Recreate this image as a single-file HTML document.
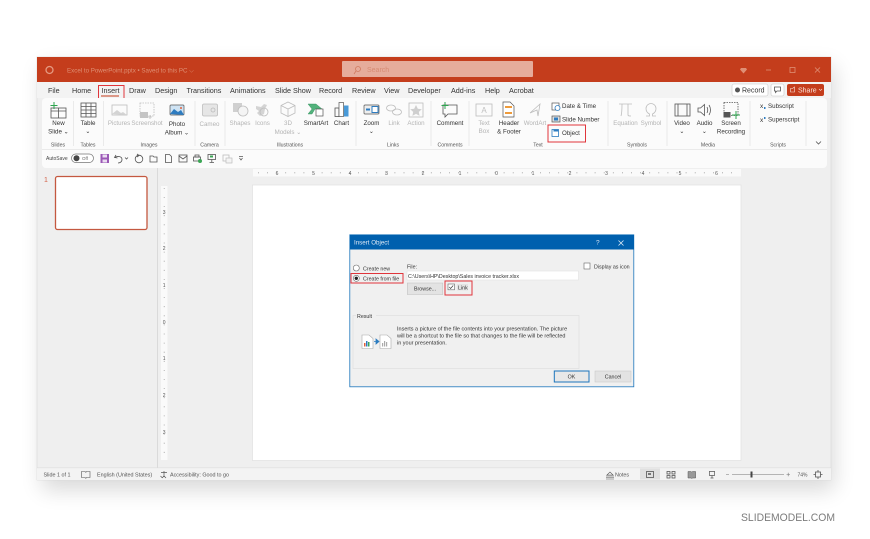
<!DOCTYPE html>
<html><head><meta charset="utf-8"><style>
html,body{margin:0;padding:0;background:#fff;width:870px;height:539px;overflow:hidden}
svg{display:block;font-family:"Liberation Sans",sans-serif}
.m{font-size:7.2px;fill:#333}
.l{font-size:6.2px;fill:#333;text-anchor:middle}
.g{font-size:6.2px;fill:#b4b4b4;text-anchor:middle}
.gr{font-size:5.2px;fill:#555;text-anchor:middle}
.s{font-size:5.4px;fill:#555}
.d{font-size:5.3px;fill:#333}
.dr{font-size:5.5px;fill:#333}
.i{fill:none;stroke:#555;stroke-width:.8}
.ig{fill:none;stroke:#bdbdbd;stroke-width:.8}
.r{fill:none;stroke:#e0343a;stroke-width:1}
.t{font-size:5px;fill:#555;text-anchor:middle}
</style></head><body>
<svg width="870" height="539" viewBox="0 0 870 539" xmlns="http://www.w3.org/2000/svg">
<defs><filter id="sh" x="-15%" y="-20%" width="130%" height="145%"><feGaussianBlur stdDeviation="11"/></filter>
<filter id="b"><feGaussianBlur stdDeviation="0.35"/></filter></defs>
<rect x="42" y="66" width="792" height="424" fill="#000" opacity=".15" filter="url(#sh)"/>
<g filter="url(#b)">
<rect x="37" y="57" width="794" height="423" fill="#efefef" stroke="#d8d8d8" stroke-width=".6"/>
<rect x="37" y="57" width="794" height="25" fill="#c43e1c"/>
<circle cx="49.500" cy="70" r="3.500" fill="none" stroke="#e59a82" stroke-width="1.300"/>
<text x="67" y="72.500" font-size="6.200" fill="#df8f75">Excel to PowerPoint.pptx  •  Saved to this PC ⌵</text>
<rect x="342" y="61" width="191" height="16" rx="1" fill="#e6ac9b"/>
<circle cx="358" cy="69" r="2.500" fill="none" stroke="#d07a5f" stroke-width=".8"/><path d="M356 71l-2 3" stroke="#d07a5f" stroke-width=".8"/>
<text x="367" y="71.800" font-size="7" fill="#d68b73">Search</text>
<path d="M741 68h5l1 1.500-3.500 4-3.500-4z" fill="#df8f75"/>
<path d="M766 70h5" stroke="#df8f75" stroke-width=".8"/>
<rect x="790" y="67.500" width="5" height="5" fill="none" stroke="#df8f75" stroke-width=".8"/>
<path d="M815 67.500l5 5m0-5l-5 5" stroke="#df8f75" stroke-width=".8"/>

<rect x="37" y="82" width="794" height="16" fill="#f3f3f3"/>
<g class="m"><text class="m" x="48" y="93">File</text><text class="m" x="72" y="93">Home</text><text class="m" x="101.500" y="93">Insert</text><text class="m" x="129" y="93">Draw</text><text class="m" x="155" y="93">Design</text><text class="m" x="186.500" y="93">Transitions</text><text class="m" x="230" y="93">Animations</text><text class="m" x="275" y="93">Slide Show</text><text class="m" x="319" y="93">Record</text><text class="m" x="352" y="93">Review</text><text class="m" x="384" y="93">View</text><text class="m" x="408" y="93">Developer</text><text class="m" x="451" y="93">Add-ins</text><text class="m" x="485" y="93">Help</text><text class="m" x="509" y="93">Acrobat</text></g>
<rect x="101" y="95.500" width="18" height="1" fill="#c43e1c"/>
<rect x="98.500" y="85.500" width="25.500" height="14.500" class="r"/>

<rect x="732" y="84" width="36" height="12" rx="2" fill="#fff" stroke="#c8c8c8" stroke-width=".6"/>
<circle cx="737.500" cy="90" r="2.500" fill="#555"/><text x="742" y="92.500" font-size="7" fill="#333">Record</text>
<rect x="771" y="84" width="13" height="12" rx="2" fill="#fff" stroke="#c8c8c8" stroke-width=".6"/><path d="M774.500 87h6v4h-3.500l-1.500 1.500v-1.500h-1z" class="i"/>
<rect x="787" y="84" width="37" height="12" rx="2" fill="#c43e1c"/><text x="798" y="92.500" font-size="7" fill="#fbe3da">Share</text><path d="M790.500 88.500h2l2-1.500v5h-4z" fill="none" stroke="#fbe3da" stroke-width=".6"/><path d="M819 89l1.500 1.500 1.500-1.500" fill="none" stroke="#fbe3da" stroke-width=".6"/>

<rect x="42" y="98" width="785" height="70" rx="4" fill="#fbfbfb"/>
<rect x="42" y="149" width="785" height=".8" fill="#e6e6e6"/>
<g stroke="#e3e3e3" stroke-width=".7"><path d="M73.500 101v45M103.500 101v45M195 101v45M225 101v45M356 101v45M431 101v45M469 101v45M608 101v45M667 101v45M750 101v45M806 101v45"/></g>

<!-- New slide -->
<rect x="51" y="108" width="15" height="10" class="i"/><path d="M58.500 108v10M51 111h15" class="i"/><path d="M54 102v7M50.500 105.500h7" stroke="#2ea44f" stroke-width="1"/>
<text class="l" x="58.500" y="125">New</text><text class="l" x="58.500" y="133.500">Slide ⌄</text>
<!-- Table -->
<rect x="81" y="103" width="15" height="14" class="i"/><path d="M81 106.500h15M81 110h15M81 113.500h15M86 103v14M91 103v14" class="i"/>
<text class="l" x="88" y="125">Table</text><text class="l" x="88" y="133">⌄</text>
<!-- Images -->
<rect x="112" y="105" width="15" height="10" class="ig" fill="#eee"/><path d="M112 114l5-4 4 3 2-1 4 3z" fill="#d4d4d4"/>
<rect x="140" y="103" width="14" height="13" class="ig" stroke-dasharray="1.500 1"/><rect x="140" y="112" width="8" height="6" fill="#c4c4c4"/><path d="M150 115v4M148 117h4" class="ig"/>
<text class="g" x="119" y="125">Pictures</text><text class="g" x="147" y="125">Screenshot</text>
<rect x="170" y="105" width="14" height="10" rx="1" fill="#cfe3f3" stroke="#555" stroke-width=".7"/><path d="M170 114l4-5 4 3 3-2 3 5z" fill="#2d7cc0"/><circle cx="181" cy="108" r="1" fill="#e0603c"/>
<text class="l" x="177" y="126">Photo</text><text class="l" x="177" y="134.500">Album ⌄</text>
<!-- Cameo -->
<rect x="202.500" y="104" width="15" height="12" rx="1.500" fill="#e6e6e6" stroke="#bdbdbd" stroke-width=".8"/><circle cx="213" cy="110" r="2" class="ig"/>
<text class="g" x="209.500" y="126">Cameo</text>
<!-- Illustrations -->
<rect x="233" y="103" width="9" height="9" fill="#d0d0d0"/><circle cx="243" cy="111" r="5" fill="#f4f4f4" stroke="#bdbdbd" stroke-width=".8"/>
<path d="M256 106l5 1 3-3 3 1-2 4-1 5-4 2-3-3 2-2-3-2z" fill="#d4d4d4"/><circle cx="264" cy="112" r="4" class="ig"/>
<path d="M288 102l7 3.500v7.500l-7 3.500-7-3.500v-7.500z M281 105.500l7 3.500 7-3.500M288 109v7.500" class="ig"/>
<text class="g" x="240" y="125">Shapes</text><text class="g" x="262.500" y="125">Icons</text><text class="g" x="288" y="125">3D</text><text class="g" x="288" y="134">Models ⌄</text>
<path d="M308 104h8l6 5h-7l-3 5h-4l4-5z" fill="#53b27c" stroke="#2b8a55" stroke-width=".4"/><rect x="316" y="109" width="7" height="7" fill="#fff" stroke="#555" stroke-width=".7"/>
<text class="l" x="316" y="125">SmartArt</text>
<rect x="335" y="108" width="4" height="8.500" class="i"/><rect x="339" y="102.500" width="4.500" height="14" fill="#fff" stroke="#555" stroke-width=".7"/><rect x="344" y="105.500" width="4.500" height="11" fill="#4a9ad8"/>
<text class="l" x="341.500" y="125">Chart</text>
<!-- Links -->
<rect x="364" y="105" width="15" height="9" rx="1" fill="#eee" stroke="#555" stroke-width=".7"/><rect x="372" y="106.500" width="6" height="6" fill="#fff" stroke="#2d7cc0" stroke-width="1"/><rect x="366" y="108.500" width="4" height="2" fill="#2d7cc0"/>
<text class="l" x="371.500" y="125">Zoom</text><text class="l" x="371.500" y="133">⌄</text>
<ellipse cx="391" cy="108" rx="4.500" ry="3" class="ig"/><ellipse cx="397" cy="112" rx="4.500" ry="3" class="ig"/>
<text class="g" x="394" y="125">Link</text>
<rect x="409" y="103" width="14" height="14" class="ig"/><path d="M416 105l1.800 3.700 4 .5-3 2.700.8 4-3.600-2-3.600 2 .8-4-3-2.700 4-.5z" fill="#cfcfcf"/>
<text class="g" x="416" y="125">Action</text>
<!-- Comment -->
<path d="M443 105h14v9h-9l-3 3v-3h-2z" class="i"/><path d="M445 102v7M441.500 105.500h7" stroke="#2ea44f" stroke-width="1"/>
<text class="l" x="450" y="125">Comment</text>
<!-- Text -->
<rect x="476" y="104" width="16" height="12" class="ig"/><text x="484" y="113" font-size="8" fill="#c0c0c0" text-anchor="middle">A</text>
<text class="g" x="484" y="125">Text</text><text class="g" x="484" y="133">Box</text>
<path d="M503 102h7l4 4v11h-11z" fill="#fff" stroke="#555" stroke-width=".7"/><rect x="505" y="106" width="7" height="2" fill="#ee9b3b"/><rect x="505" y="112" width="7" height="2" fill="#ee9b3b"/>
<text class="l" x="509" y="125">Header</text><text class="l" x="509" y="133.500">&amp; Footer</text>
<path d="M530 113l10-9-2 12-1-6-7 3" class="ig"/>
<text class="g" x="535" y="125">WordArt</text>
<rect x="552" y="103" width="7" height="7" fill="#fff" stroke="#555" stroke-width=".7"/><circle cx="557.500" cy="108" r="2.500" fill="#fff" stroke="#2d7cc0" stroke-width=".8"/>
<text class="l" x="562" y="108.200" style="text-anchor:start">Date &amp; Time</text>
<rect x="552" y="116" width="8" height="6" fill="#ddd" stroke="#555" stroke-width=".7"/><rect x="554" y="117.500" width="4" height="3" fill="#2d7cc0"/>
<text class="l" x="562" y="121.500" style="text-anchor:start">Slide Number</text>
<rect x="552" y="129.500" width="6.500" height="7" fill="#fff" stroke="#2d7cc0" stroke-width=".8"/><rect x="553.500" y="129.500" width="5" height="2" fill="#2d7cc0"/>
<text class="l" x="562" y="135" style="text-anchor:start">Object</text>
<rect x="548" y="125" width="37.500" height="17" class="r"/>
<!-- Symbols -->
<path d="M619 104h13M622 104c0 5 0 9-1 12M628 104v11c0 1 1 1 3 1" class="ig" stroke-width="1"/>
<path d="M646 116h3.500v-2c-2-1-3.500-3-3.500-5.500 0-3 2.500-5 5-5s5 2 5 5c0 2.500-1.500 4.500-3.500 5.500v2h3.500" class="ig" stroke-width="1"/>
<text class="g" x="625.500" y="125">Equation</text><text class="g" x="651" y="125">Symbol</text>
<!-- Media -->
<rect x="675" y="104" width="15" height="12" class="i"/><path d="M678 104v12M687 104v12" class="i"/>
<text class="l" x="682" y="125">Video</text><text class="l" x="682" y="133">⌄</text>
<path d="M698 108h2.500l4-3.500v11l-4-3.500h-2.500z M707 107c1 2 1 4 0 6M709 105c2 3 2 7 0 10" class="i"/>
<text class="l" x="704.500" y="125">Audio</text><text class="l" x="704.500" y="133">⌄</text>
<rect x="724" y="102.500" width="14" height="13" class="i" stroke-dasharray="1.500 1"/><rect x="723.500" y="112" width="7" height="5.500" fill="#555"/><path d="M736 111v8M732 115h8" stroke="#2ea44f" stroke-width="1"/>
<text class="l" x="731" y="125">Screen</text><text class="l" x="731" y="133.500">Recording</text>
<!-- Scripts -->
<text x="760" y="108" font-size="6.500" fill="#333">x</text><rect x="764" y="107" width="1.500" height="2" fill="#2d7cc0"/>
<text class="l" x="768" y="108" style="text-anchor:start">Subscript</text>
<text x="760" y="122" font-size="6.500" fill="#333">x</text><rect x="764" y="117" width="1.500" height="2" fill="#2d7cc0"/>
<text class="l" x="768" y="121.500" style="text-anchor:start">Superscript</text>
<path d="M816 141.500l2.500 2.500 2.500-2.500" fill="none" stroke="#555" stroke-width=".8"/>
<!-- group labels -->
<text class="gr" x="58" y="146.500">Slides</text><text class="gr" x="88" y="146.500">Tables</text><text class="gr" x="149" y="146.500">Images</text><text class="gr" x="209.500" y="146.500">Camera</text><text class="gr" x="290" y="146.500">Illustrations</text><text class="gr" x="393" y="146.500">Links</text><text class="gr" x="450" y="146.500">Comments</text><text class="gr" x="538" y="146.500">Text</text><text class="gr" x="637" y="146.500">Symbols</text><text class="gr" x="708" y="146.500">Media</text><text class="gr" x="778" y="146.500">Scripts</text>
<!-- QAT -->
<text x="46" y="160" font-size="5" fill="#444">AutoSave</text>
<rect x="71.500" y="154" width="22" height="8.500" rx="4.200" fill="#fff" stroke="#777" stroke-width=".7"/><circle cx="76.500" cy="158.200" r="3" fill="#444"/><text x="82" y="160" font-size="4.500" fill="#666">Off</text>
<rect x="100.500" y="154" width="8.500" height="9" fill="#9b59b6"/><rect x="102.500" y="154.500" width="4.500" height="3" fill="#eadcf0"/><rect x="102.500" y="159.500" width="4.500" height="3" fill="#eadcf0"/>
<path d="M116 155l-1.500 2.500 3 .5M115 157.500c3-2 7-1 7 2s-3 3.500-4 3.500" class="i"/>
<path d="M125 157.500l1.500 1.500 1.500-1.500" class="i"/>
<circle cx="139" cy="159" r="3.800" class="i"/><path d="M137 154l2 1.500-2 1.500" class="i"/>
<path d="M150 156h3l1 1h3v5h-7z" class="i"/>
<path d="M165.500 154.500h4l2 2v6h-6z" class="i"/>
<rect x="179" y="155" width="8" height="7" class="i"/><path d="M179 156l4 3 4-3" class="i"/>
<rect x="193.500" y="157" width="7" height="4" class="i"/><rect x="195" y="155" width="4" height="2" class="i"/><circle cx="200" cy="161" r="2" fill="#3aa655"/>
<rect x="208" y="154.500" width="7.500" height="5" class="i"/><path d="M211.800 159.500v3M209.500 162.500h4.500" class="i"/><rect x="210" y="155.500" width="3" height="2" fill="#3aa655"/>
<rect x="223" y="155" width="6" height="6" class="ig"/><rect x="226" y="158" width="6" height="5" fill="#f4f4f4" stroke="#bdbdbd" stroke-width=".7"/>
<path d="M239 156.500h4M239.500 158l1.500 2 1.500-2" fill="none" stroke="#555" stroke-width=".7"/>

<!-- body -->
<rect x="157" y="168" width=".8" height="300" fill="#d4d4d4"/>
<text x="44" y="182" font-size="7" fill="#d4624a">1</text>
<rect x="55.500" y="176.500" width="91.500" height="53" rx="2" fill="#fff" stroke="#c4593f" stroke-width="1.300"/>
<rect x="253" y="169" width="488" height="7.500" fill="#fafafa"/>
<g class="t">
<text class="t" x="277" y="175">6</text><text class="t" x="313.500" y="175">5</text><text class="t" x="350" y="175">4</text><text class="t" x="386.500" y="175">3</text><text class="t" x="423" y="175">2</text><text class="t" x="460" y="175">1</text><text class="t" x="496.500" y="175">0</text><text class="t" x="533" y="175">1</text><text class="t" x="570" y="175">2</text><text class="t" x="606.500" y="175">3</text><text class="t" x="643" y="175">4</text><text class="t" x="680" y="175">5</text><text class="t" x="716.500" y="175">6</text></g>
<path d="M258 172.800H736" stroke="#888" stroke-width=".8" stroke-dasharray=".8 8.300"/>
<rect x="161" y="186" width="6.500" height="274" fill="#fafafa"/>
<path d="M164.200 188V458" stroke="#888" stroke-width=".8" stroke-dasharray=".8 8.300"/>
<g class="t"><text class="t" x="164.200" y="214">3</text><text class="t" x="164.200" y="250">2</text><text class="t" x="164.200" y="287">1</text><text class="t" x="164.200" y="324">0</text><text class="t" x="164.200" y="360">1</text><text class="t" x="164.200" y="397">2</text><text class="t" x="164.200" y="434">3</text></g>
<rect x="252.500" y="185" width="488.500" height="275.500" fill="#fff" stroke="#dcdcdc" stroke-width=".6"/>

<!-- status -->
<rect x="37" y="468" width="794" height="12" fill="#f3f3f3"/><rect x="37" y="467.500" width="794" height=".6" fill="#dcdcdc"/>
<text class="s" x="43.500" y="476.500">Slide 1 of 1</text>
<path d="M81.500 471.500h3.500l.8.800.8-.8h3.400v6h-3.400l-.8.800-.8-.8h-3.500z" fill="none" stroke="#555" stroke-width=".6"/>
<text class="s" x="97" y="476.500">English (United States)</text>
<path d="M161 472.500h6M164 471v6M162 478l2-2 2 2M160.500 476l2 2" fill="none" stroke="#555" stroke-width=".7"/>
<text class="s" x="170" y="476.500">Accessibility: Good to go</text>
<path d="M606 476h8M606 477.500h8M606 479h8M607 475l3-3 3 3z" fill="none" stroke="#555" stroke-width=".6"/>
<text class="s" x="615" y="476.500">Notes</text>
<rect x="640" y="468.500" width="20" height="11" fill="#e0e0e0"/>
<rect x="646.500" y="471.500" width="7" height="6" fill="none" stroke="#555" stroke-width=".8"/><rect x="648" y="473" width="3" height="2" fill="#777"/>
<rect x="667" y="471.500" width="3" height="2.500" class="i"/><rect x="672" y="471.500" width="3" height="2.500" class="i"/><rect x="667" y="475.500" width="3" height="2.500" class="i"/><rect x="672" y="475.500" width="3" height="2.500" class="i"/>
<path d="M688 471.500h3l.8.600.8-.6h3v6.500h-3l-.8.500-.8-.5h-3z" fill="#999" stroke="#555" stroke-width=".5"/>
<path d="M709 471.500h6M709.500 471.500v4h5v-4M712 475.500v2.500M710.500 478h3" fill="none" stroke="#555" stroke-width=".7"/>
<path d="M726 474.500h3M732 474.500h52M786.500 474.500h3.500M788.200 472.800v3.400" stroke="#777" stroke-width=".6"/>
<rect x="750.500" y="471.500" width="2" height="6" fill="#444"/>
<text class="s" x="797.500" y="476.500" style="font-size:5px">74%</text>
<rect x="815.500" y="472" width="5" height="5" fill="none" stroke="#555" stroke-width=".8"/><path d="M818 470v2M818 477v2M813.500 474.500h2M820.500 474.500h2" stroke="#555" stroke-width=".8"/>

<!-- dialog -->
<rect x="349.800" y="234.800" width="284" height="152" fill="#f0f0f0" stroke="#1c75bc" stroke-width=".8"/>
<rect x="350" y="235" width="284" height="14.500" fill="#0560ae"/>
<text x="354" y="244.500" font-size="6.200" fill="#dbe9f5">Insert Object</text>
<text x="596" y="244.500" font-size="6.500" fill="#dbe9f5">?</text>
<path d="M618.500 240.500l5 5m0-5l-5 5" stroke="#dbe9f5" stroke-width=".8"/>
<circle cx="356.300" cy="268" r="3" fill="#fff" stroke="#666" stroke-width=".6"/>
<text class="d" x="363" y="270.300">Create new</text>
<circle cx="356.300" cy="278.300" r="3" fill="#fff" stroke="#666" stroke-width=".6"/><circle cx="356.300" cy="278.300" r="1.700" fill="#222"/>
<text class="d" x="363" y="280.500">Create from file</text>
<rect x="351" y="273.500" width="52" height="9.500" class="r"/>
<text class="d" x="407" y="268.500">File:</text>
<rect x="407" y="271" width="171.500" height="9" fill="#fff" stroke="#ddd" stroke-width=".5"/>
<text class="d" x="408" y="277.800">C:\Users\HP\Desktop\Sales invoice tracker.xlsx</text>
<rect x="407.300" y="283" width="35.500" height="11.500" fill="#e3e3e3" stroke="#bdbdbd" stroke-width=".5"/>
<text class="d" x="414" y="290.500">Browse...</text>
<rect x="448" y="284" width="6.500" height="5.800" fill="#fff" stroke="#666" stroke-width=".6"/><path d="M449.300 287l1.300 1.500 2.600-3" fill="none" stroke="#333" stroke-width=".6"/>
<rect x="457" y="284" width="11" height="6.500" fill="#e3e3e3"/>
<text class="d" x="458" y="289.300">Link</text>
<rect x="445" y="281" width="27" height="14" class="r"/>
<rect x="584" y="263" width="6" height="6" fill="#fff" stroke="#666" stroke-width=".6"/>
<text class="d" x="594" y="268.300">Display as icon</text>
<rect x="353" y="315.500" width="226" height="53" fill="none" stroke="#dcdcdc" stroke-width=".6"/>
<rect x="356" y="313" width="20" height="6" fill="#f0f0f0"/>
<text class="d" x="357" y="317.800">Result</text>
<text class="dr" x="397" y="330.500">Inserts a picture of the file contents into your presentation. The picture</text>
<text class="dr" x="397" y="337.500">will be a shortcut to the file so that changes to the file will be reflected</text>
<text class="dr" x="397" y="344.500">in your presentation.</text>
<path d="M362 335h7l4 3.500v10h-11z" fill="#fff" stroke="#aaa" stroke-width=".6"/><rect x="364" y="343" width="1.500" height="3.500" fill="#e0603c"/><rect x="366" y="341" width="1.500" height="5.500" fill="#2d7cc0"/><rect x="368" y="342" width="1.500" height="4.500" fill="#3aa655"/>
<path d="M374 341.500h3M376 339l3 2.500-3 2.500z" fill="#2d7cc0" stroke="#2d7cc0" stroke-width=".8"/>
<path d="M380 335h7l4 3.500v10h-11z" fill="#fff" stroke="#aaa" stroke-width=".6"/><rect x="382" y="343" width="1.200" height="3.500" fill="#aaa"/><rect x="384" y="341" width="1.200" height="5.500" fill="#aaa"/><rect x="386" y="342" width="1.200" height="4.500" fill="#aaa"/>
<rect x="554.300" y="371" width="34.700" height="11" fill="#e8e8e8" stroke="#1c75bc" stroke-width="1"/><text class="d" x="571.500" y="378.500" text-anchor="middle">OK</text>
<rect x="595" y="371" width="36" height="11" fill="#e3e3e3" stroke="#c4c4c4" stroke-width=".5"/><text class="d" x="613" y="378.500" text-anchor="middle">Cancel</text>
</g>
<text x="741" y="521" font-size="10.800" fill="#7c7c7c" textLength="94" lengthAdjust="spacingAndGlyphs">SLIDEMODEL.COM</text>
</svg>
</body></html>
